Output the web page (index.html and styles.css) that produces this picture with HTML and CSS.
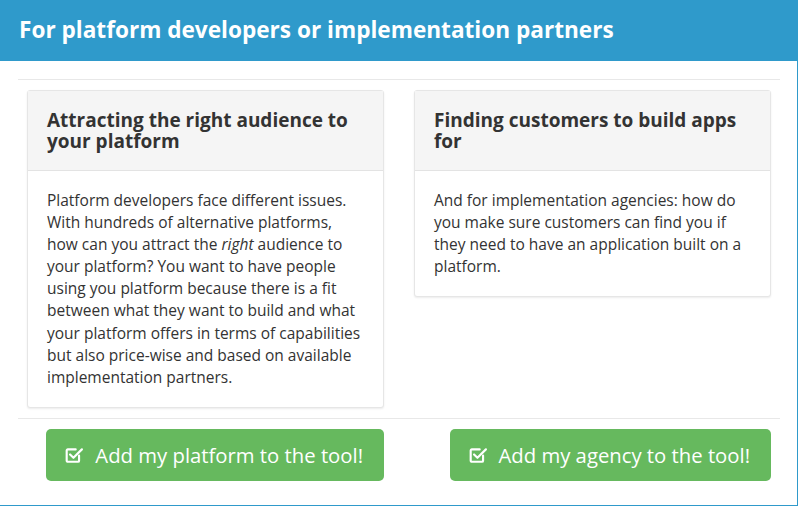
FILE: index.html
```html
<!DOCTYPE html>
<html lang="en">
<head>
  <meta charset="UTF-8" />
  <meta name="viewport" content="width=device-width, initial-scale=1.0" />
  <title>For platform developers</title>
  <link rel="stylesheet" href="styles.css">
</head>
<body>
  <div class="panel">
    <div class="panel-heading">For platform developers or implementation partners</div>
    <div class="panel-body">
      <hr>
      <div class="cols">
        <div class="card">
          <div class="card-head">Attracting the right audience to your platform</div>
          <div class="card-body">
            Platform developers face different issues. With hundreds of alternative platforms, how can you attract the <em>right</em> audience to your platform? You want to have people using you platform because there is a fit between what they want to build and what your platform offers in terms of capabilities but also price-wise and based on available implementation partners.
          </div>
        </div>
        <div class="card">
          <div class="card-head">Finding customers to build apps for</div>
          <div class="card-body">
            And for implementation agencies: how do you make sure customers can find you if they need to have an application built on a platform.
          </div>
        </div>
      </div>
      <hr>
      <div class="cols actions">
        <a class="btn" href="#">
          <svg class="ico" viewBox="0 0 16 16"><path d="M12.5 8.5v4.5a1 1 0 0 1-1 1h-9a1 1 0 0 1-1-1V4a1 1 0 0 1 1-1h7" /><path d="M4.5 7.5l3 3L15 3" /></svg>
          Add my platform to the tool!
        </a>
        <a class="btn" href="#">
          <svg class="ico" viewBox="0 0 16 16"><path d="M12.5 8.5v4.5a1 1 0 0 1-1 1h-9a1 1 0 0 1-1-1V4a1 1 0 0 1 1-1h7" /><path d="M4.5 7.5l3 3L15 3" /></svg>
          Add my agency to the tool!
        </a>
      </div>
    </div>
  </div>
</body>
</html>
```

FILE: styles.css
```css
*{box-sizing:border-box}
body{margin:0;background:#fff;font-family:"Open Sans",sans-serif;color:#333;overflow:hidden}
.panel{width:799px;margin-left:-1px;border:1px solid #2f9acb;border-top:0;min-height:506px}
.panel-heading{height:61px;background:#2f9acb;color:#fff;font-weight:700;font-size:22.6px;line-height:60px;padding-left:19px}
.panel-body{padding:18px 17px 0 18px}
hr{border:0;border-top:1px solid #e8e8e8;margin:0}
.cols{display:grid;grid-template-columns:357px 357px;column-gap:30px;padding-left:9px}
.panel-body > .cols:first-of-type{margin:10px 0}
.card{background:#fff;border:1px solid #e6e6e6;border-radius:3px;box-shadow:0 1px 2px rgba(0,0,0,.08);align-self:start}
.card-head{background:#f5f5f5;border-bottom:1px solid #e3e3e3;padding:19px 19px 18px;font-weight:700;font-size:19px;line-height:21px;color:#333}
.card-body{padding:18px 19px 19px;font-size:15.5px;line-height:22.1px;color:#333}
.actions{margin-top:10px;justify-items:end}
.btn{display:inline-flex;align-items:center;gap:12px;height:52px;padding:0 21px 0 19px;background:#66b95e;color:#fff;text-decoration:none;font-size:20.3px;border-radius:5px}
.ico{width:18px;height:18px;fill:none;stroke:#fff;stroke-width:1.9;stroke-linejoin:round;stroke-linecap:round}
```
